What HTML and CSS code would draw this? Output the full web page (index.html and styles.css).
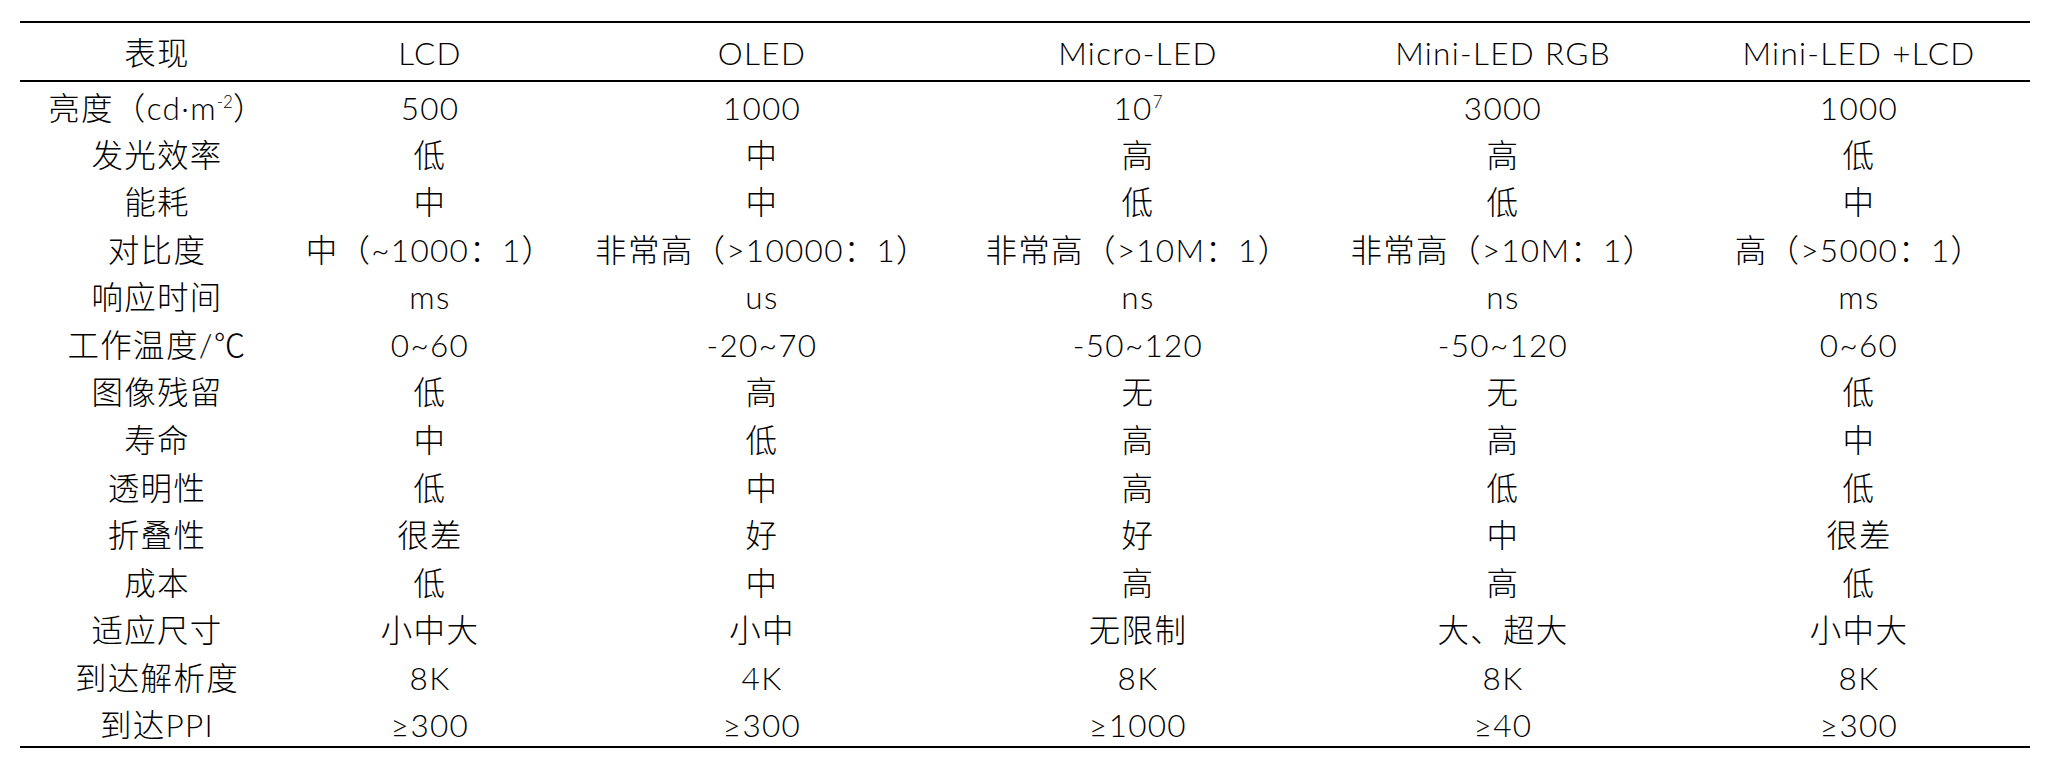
FILE: index.html
```
<!DOCTYPE html>
<html lang="zh-CN">
<head>
<meta charset="utf-8">
<title>显示技术对比</title>
<link rel="stylesheet" href="styles.css">
</head>
<body>
<table class="spec">
  <colgroup>
    <col class="c1"><col class="c2"><col class="c3"><col class="c4"><col class="c5"><col class="c6">
  </colgroup>
  <thead>
    <tr><th>表现</th><th>LCD</th><th>OLED</th><th>Micro-LED</th><th>Mini-LED RGB</th><th>Mini-LED +LCD</th></tr>
  </thead>
  <tbody>
    <tr><td>亮度（cd·m<sup>-2</sup>）</td><td>500</td><td>1000</td><td>10<sup>7</sup></td><td>3000</td><td>1000</td></tr>
    <tr><td>发光效率</td><td>低</td><td>中</td><td>高</td><td>高</td><td>低</td></tr>
    <tr><td>能耗</td><td>中</td><td>中</td><td>低</td><td>低</td><td>中</td></tr>
    <tr><td>对比度</td><td>中（~1000：1）</td><td>非常高（&gt;10000：1）</td><td>非常高（&gt;10M：1）</td><td>非常高（&gt;10M：1）</td><td>高（&gt;5000：1）</td></tr>
    <tr><td>响应时间</td><td>ms</td><td>us</td><td>ns</td><td>ns</td><td>ms</td></tr>
    <tr><td>工作温度/℃</td><td>0~60</td><td>-20~70</td><td>-50~120</td><td>-50~120</td><td>0~60</td></tr>
    <tr><td>图像残留</td><td>低</td><td>高</td><td>无</td><td>无</td><td>低</td></tr>
    <tr><td>寿命</td><td>中</td><td>低</td><td>高</td><td>高</td><td>中</td></tr>
    <tr><td>透明性</td><td>低</td><td>中</td><td>高</td><td>低</td><td>低</td></tr>
    <tr><td>折叠性</td><td>很差</td><td>好</td><td>好</td><td>中</td><td>很差</td></tr>
    <tr><td>成本</td><td>低</td><td>中</td><td>高</td><td>高</td><td>低</td></tr>
    <tr><td>适应尺寸</td><td>小中大</td><td>小中</td><td>无限制</td><td>大、超大</td><td>小中大</td></tr>
    <tr><td>到达解析度</td><td>8K</td><td>4K</td><td>8K</td><td>8K</td><td>8K</td></tr>
    <tr><td>到达PPI</td><td>≥300</td><td>≥300</td><td>≥1000</td><td>≥40</td><td>≥300</td></tr>
  </tbody>
</table>
</body>
</html>
```
FILE: styles.css
```
html, body {
  margin: 0;
  padding: 0;
  background: #ffffff;
}

body {
  padding: 21px 0 0 20px;
  font-family: "Lato", "Noto Sans CJK SC", sans-serif;
  font-weight: 300;
  color: #000000;
}

.spec {
  width: 2010px;
  table-layout: fixed;
  border-collapse: collapse;
  border-top: 2px solid #000000;
  border-bottom: 2px solid #000000;
  font-size: 31.5px;
  letter-spacing: 1.3px;
}

.c1 { width: 274px; }
.c2 { width: 272px; }
.c3 { width: 392px; }
.c4 { width: 360px; }
.c5 { width: 370px; }
.c6 { width: 342px; }

.spec th,
.spec td {
  padding: 0;
  text-align: center;
  white-space: nowrap;
  font-weight: 300;
  line-height: 1;
}

.spec thead th {
  height: 59px;
  padding-top: 5px;
  box-sizing: border-box;
  border-bottom: 2px solid #000000;
}

.spec tbody td {
  height: 47.57px;
  padding-top: 6px;
  box-sizing: border-box;
}

.spec sup {
  font-size: 17px;
  line-height: 0;
  letter-spacing: 0;
  vertical-align: 12px;
}
```
